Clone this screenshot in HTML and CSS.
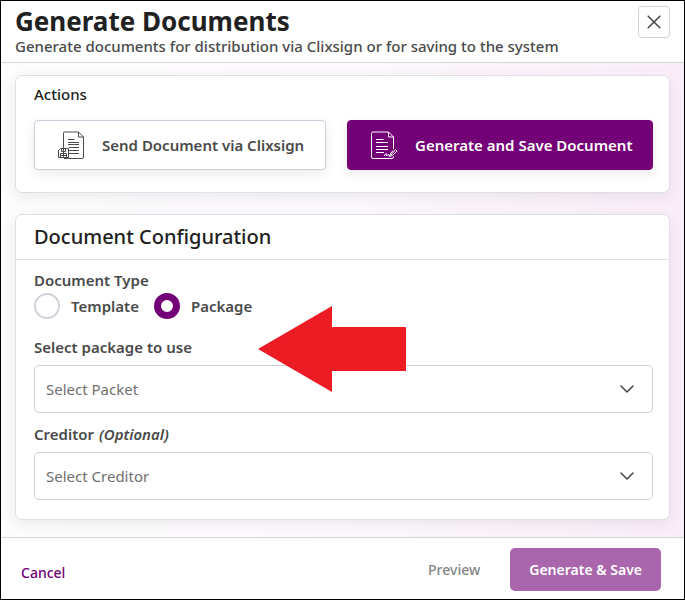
FILE: index.html
```html
<!DOCTYPE html>
<html lang="en">
<head>
<meta charset="utf-8">
<meta name="viewport" content="width=device-width, initial-scale=1">
<title>Generate Documents</title>
<link rel="stylesheet" href="styles.css">
</head>
<body>
<form class="dialog">
  <header class="dialog-header">
    <div>
      <h1 class="dialog-title">Generate Documents</h1>
      <p class="dialog-subtitle">Generate documents for distribution via Clixsign or for saving to the system</p>
    </div>
    <button type="button" class="close" aria-label="Close">
      <svg width="14" height="14" viewBox="0 0 14 14" fill="none" stroke="currentColor" stroke-width="1.6" stroke-linecap="round"><path d="M1.2 1.2l11.6 11.6M12.8 1.2L1.2 12.8"/></svg>
    </button>
  </header>

  <main class="dialog-body">
    <section class="card actions">
      <h2 class="actions-title">Actions</h2>
      <div class="actions-row">
        <button type="button" class="action">
          <svg class="action-icon" viewBox="0 0 28 28" fill="none" stroke="currentColor" stroke-width="1">
            <path d="M6.500 17V2Q6.500 1 7.500 1H21.500L26.500 6V26Q26.500 27.500 25 27.500H7"/>
            <path d="M21.500 1V6H26.500M11 8.500H17.500M11 11.500H22M11 13.500H22M12 16.500H22M12 19.500H22M12 22.500H22"/>
            <path d="M1.500 26.500V19.500L3.500 17.500H11.500V26.500Z"/>
            <path d="M4.500 17.500V20.500H8.500V17.500M6.500 17.500V26M3.500 26V22.500H9.500V26M3.500 24.500H9.500"/>
          </svg>
          Send Document via Clixsign
        </button>
        <button type="button" class="action action-selected">
          <svg class="action-icon" viewBox="0 0 28 28" fill="none" stroke="currentColor" stroke-width="1">
            <path d="M23.500 18V6L18.500 1H3Q1.500 1 1.500 2.500V26Q1.500 27.500 3 27.500H22Q23.500 27.500 23.500 25.500"/>
            <path d="M18.500 1V6H23.500M6 8.500H13.500M6 11.500H18M6 15.500H18M6 18.500H18M6 21.500H14"/>
            <path d="M14 25L16 22.500L16.500 25L18.500 23L19 25L21 24L25.500 18.500L27 20L22.500 24.500L19.500 25.500L21 22L23 19.500"/>
          </svg>
          Generate and Save Document
        </button>
      </div>
    </section>

    <section class="card">
      <h2 class="config-title">Document Configuration</h2>
      <div class="config-body">
        <fieldset class="types">
          <legend class="label">Document Type</legend>
          <div class="types-row">
            <label class="type"><input type="radio" name="type" value="template">Template</label>
            <label class="type"><input type="radio" name="type" value="package" checked>Package</label>
          </div>
        </fieldset>
        <div class="field">
          <label class="label" for="packet">Select package to use</label>
          <div class="select-wrap">
            <select id="packet"><option>Select Packet</option></select>
            <svg class="chevron" viewBox="0 0 14 8" fill="none" stroke="currentColor" stroke-width="1.6" stroke-linecap="round" stroke-linejoin="round"><path d="M1 1l6 6 6-6"/></svg>
            <svg class="pointer" viewBox="0 0 148 86" aria-hidden="true"><path d="M0 43L74 0V21H148V65H74V86Z" fill="#ed1c24"/></svg>
          </div>
        </div>
        <div class="field">
          <label class="label" for="creditor">Creditor <em>(Optional)</em></label>
          <div class="select-wrap">
            <select id="creditor"><option>Select Creditor</option></select>
            <svg class="chevron" viewBox="0 0 14 8" fill="none" stroke="currentColor" stroke-width="1.6" stroke-linecap="round" stroke-linejoin="round"><path d="M1 1l6 6 6-6"/></svg>
          </div>
        </div>
      </div>
    </section>
  </main>

  <footer class="dialog-footer">
    <button type="button" class="cancel">Cancel</button>
    <button type="button" class="preview">Preview</button>
    <button type="submit" class="submit">Generate &amp; Save</button>
  </footer>
</form>
</body>
</html>
```
FILE: styles.css
```css
* {
  box-sizing: border-box;
}

body {
  margin: 0;
  font-family: "Noto Sans", "Open Sans", sans-serif;
  font-size: 15px;
  font-weight: 600;
  line-height: 20px;
  color: #4a4a4a;
}

h1, h2, p {
  margin: 0;
}

button, select {
  font: inherit;
  color: inherit;
  cursor: pointer;
}

.dialog {
  display: flex;
  flex-direction: column;
  min-height: 100vh;
  border: 1px solid #000;
  background: #fff;
}

.dialog-header {
  display: flex;
  justify-content: space-between;
  align-items: flex-start;
  padding: 5px 14px 6px;
  border-bottom: 1px solid #d3d5d6;
}

.dialog-title {
  font-size: 26px;
  font-weight: 700;
  line-height: 30px;
  color: #212121;
}

.dialog-subtitle {
  font-weight: 500;
}

.close {
  display: grid;
  place-items: center;
  width: 32px;
  height: 32px;
  padding: 0;
  border: 1px solid #d3d3d6;
  border-radius: 4px;
  background: #fff;
}

.dialog-body {
  flex: 1;
  display: flex;
  flex-direction: column;
  gap: 21px;
  padding: 12px 14px 17px;
  background: linear-gradient(90deg, #fefdfe 0%, #fdfafd 50%, #fbf0fa 92%, #faedf9 100%);
}

.card {
  border: 1px solid #dee0e6;
  border-radius: 7px;
  background: #fff;
  box-shadow: 0 4px 16px rgba(0, 0, 0, 0.08);
}

.actions {
  padding: 8px 16px 22px 18px;
}

.actions-title {
  font-size: 15px;
  font-weight: 500;
  line-height: 20px;
  color: #222;
}

.actions-row {
  display: grid;
  grid-template-columns: 292fr 306fr;
  gap: 21px;
  margin-top: 16px;
}

.action {
  display: flex;
  align-items: center;
  gap: 17px;
  height: 50px;
  padding: 0 16px 0 22px;
  border: 1px solid #cfcddb;
  border-radius: 4px;
  background: #fff;
  box-shadow: 0 4px 12px rgba(0, 0, 0, 0.08);
  white-space: nowrap;
}

.action-selected {
  border-color: #730076;
  background: #730076;
  color: #fff;
}

.action-icon {
  flex: none;
  width: 28px;
  height: 28px;
}

.config-title {
  padding: 8px 18px;
  border-bottom: 1px solid #dee0e6;
  font-size: 20px;
  font-weight: 500;
  line-height: 28px;
  color: #212121;
}

.config-body {
  display: flex;
  flex-direction: column;
  gap: 11px;
  padding: 10px 16px 19px 18px;
}

.types {
  min-width: 0;
  margin: 0 0 7px;
  padding: 0;
  border: 0;
}

.label {
  display: block;
  padding: 0;
}

.label em {
  margin-left: 1px;
}

.types-row {
  display: flex;
  gap: 15px;
  margin-top: 3px;
}

.type {
  display: flex;
  align-items: center;
  gap: 11px;
}

.type input {
  appearance: none;
  width: 26px;
  height: 26px;
  margin: 0;
  border: 2px solid #ced4da;
  border-radius: 50%;
  background: #fff;
}

.type input:checked {
  border: 7px solid #730076;
}

.field .label {
  padding-bottom: 8px;
}

.select-wrap {
  position: relative;
}

.select-wrap select {
  display: block;
  appearance: none;
  width: 100%;
  height: 48px;
  padding: 0 44px 0 11px;
  border: 1px solid #cdcfda;
  border-radius: 5px;
  background: #fff;
  color: #6f6f6f;
  font-weight: 400;
}

.chevron {
  position: absolute;
  top: 20px;
  right: 19px;
  width: 14px;
  height: 8px;
  pointer-events: none;
}

.pointer {
  position: absolute;
  top: -59px;
  left: 224px;
  width: 148px;
  height: 86px;
  pointer-events: none;
}

.dialog-footer {
  display: flex;
  align-items: center;
  padding: 10px 23px 8px 20px;
  border-top: 1px solid #d3d3d6;
}

.cancel, .preview {
  padding: 0;
  border: 0;
  background: none;
  font-size: 14px;
  font-weight: 500;
}

.cancel {
  margin-right: auto;
  padding-top: 7px;
  color: #730076;
}

.preview {
  margin-right: 30px;
  color: #858585;
}

.submit {
  height: 43px;
  padding: 0 19px;
  border: 0;
  border-radius: 5px;
  background: #a966ac;
  color: #fff;
  font-size: 14px;
}
```
